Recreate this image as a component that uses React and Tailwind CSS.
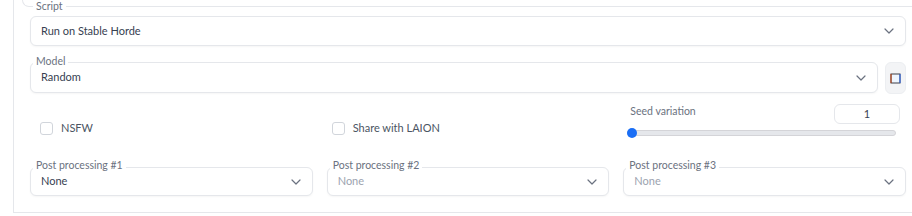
import React from 'react';

const Chevron = () => (
  <svg width="10" height="6" viewBox="0 0 10 6" className="shrink-0">
    <path d="M1 1l4 4 4-4" fill="none" stroke="#6b7280" strokeWidth="1.2" strokeLinecap="round" strokeLinejoin="round" />
  </svg>
);

const FieldLabel = ({ text }) => (
  <div className="relative z-10 h-[12px] leading-[12px] text-[10.5px] text-[#6b7280]">
    <span className="ml-[3px] px-[3px] bg-white">{text}</span>
  </div>
);

const Select = ({ value, muted, className }) => (
  <div className={`flex items-center justify-between rounded-md border border-[#e5e7eb] bg-white shadow-[0_1px_2px_rgba(0,0,0,0.04)] pl-[10px] pr-[11px] ${className}`}>
    <span className={`text-[11px] ${muted ? 'text-[#9ca3af]' : 'text-[#374151]'}`}>{value}</span>
    <Chevron />
  </div>
);

const Checkbox = ({ label }) => (
  <label className="flex items-center gap-[8px] text-[11px] text-[#4b5563]">
    <span className="w-[13px] h-[13px] rounded-[3px] border border-[#d1d5db] bg-white" />
    {label}
  </label>
);

const App = () => {
  return (
    <div className="w-[912px] h-[216px] bg-white overflow-hidden" style={{ fontFamily: 'Lato, "Noto Sans", sans-serif' }}>
      <div className="ml-[13px] h-[213px] border-l border-b border-[#e5e7eb] pl-[16px] pr-[6px]">
        {/* bottom edge of the block above */}
        <div className="-ml-[8px] -mr-[12px] h-[7px] border-l border-b border-[#e5e7eb] rounded-bl-lg" />
        <div className="-mt-[7px]">
          <FieldLabel text="Script" />
        </div>
        <Select value="Run on Stable Horde" className="mt-[4px] h-[30px]" />

        <div className="mt-[9px] mb-[-5px]">
          <FieldLabel text="Model" />
        </div>
        <div className="flex items-start gap-[7px]">
          <Select value="Random" className="flex-1 h-[31px]" />
          <button className="w-[21px] h-[32px] rounded-md bg-[#f3f4f6] border border-[#eceef1] flex items-center justify-center">
            <svg width="11" height="11" viewBox="0 0 11 11">
              <rect x="1" y="1" width="9" height="9" fill="#eef6ff" stroke="#3f3f46" strokeWidth="1" />
              <path d="M1 1v9" stroke="#c2410c" strokeWidth="1" />
              <path d="M10 1v9" stroke="#2563eb" strokeWidth="1" />
            </svg>
          </button>
        </div>

        <div className="mt-[10px] grid grid-cols-3 gap-[14px] h-[36px]">
          <div className="pt-[16px] pl-[10px]">
            <Checkbox label="NSFW" />
          </div>
          <div className="pt-[16px] pl-[5px]">
            <Checkbox label="Share with LAION" />
          </div>
          <div className="flex flex-col">
            <div className="flex items-start justify-between pl-[7px] pr-[6px]">
              <span className="text-[10.5px] leading-[12px] mt-[1px] text-[#6b7280]">Seed variation</span>
              <div className="w-[66px] h-[20px] rounded-md border border-[#e5e7eb] flex items-center justify-center text-[11px] text-[#374151]">1</div>
            </div>
            <div className="relative mt-[6px] ml-[4px] mr-[10px] h-[6px] rounded-full bg-[#e5e7eb] border border-[#d4d4d8]">
              <span className="absolute -left-[1px] -top-[3px] w-[10px] h-[10px] rounded-full bg-[#1a6ef5]" />
            </div>
          </div>
        </div>

        <div className="mt-[19px] grid grid-cols-3 gap-[14px]">
          {['#1', '#2', '#3'].map((n, i) => (
            <div key={n}>
              <div className="mb-[-4px]">
                <FieldLabel text={`Post processing ${n}`} />
              </div>
              <Select value="None" muted={i > 0} className="h-[29px]" />
            </div>
          ))}
        </div>
      </div>
    </div>
  );
};

export default App;
